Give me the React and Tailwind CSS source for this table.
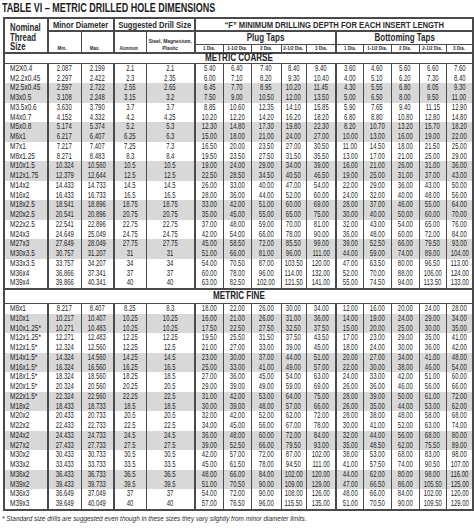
import React from "react";

const COARSE = [
  "w M2X0.4 2.087 2.199 2.1 2.1 5.40 6.40 7.40 8.40 9.40 3.60 4.60 5.60 6.60 7.60",
  "w M2.2x0.45 2.297 2.422 2.3 2.35 6.00 7.10 8.20 9.30 10.40 4.00 5.10 6.20 7.30 8.40",
  "g M2.5x0.45 2.597 2.722 2.55 2.65 6.45 7.70 8.95 10.20 11.45 4.30 5.55 6.80 8.05 9.30",
  "g M3x0.5 3.108 2.248 3.15 3.2 7.50 9.00 10.50 12.00 13.50 5.00 6.50 8.00 9.50 11.00",
  "w M3.5x0.6 3.630 3.790 3.7 3.7 8.85 10.60 12.35 14.10 15.85 5.90 7.65 9.40 11.15 12.90",
  "w M4x0.7 4.152 4.332 4.2 4.25 10.20 12.20 14.20 16.20 18.20 6.80 8.80 10.80 12.80 14.80",
  "g M5x0.8 5.174 5.374 5.2 5.3 12.30 14.80 17.30 19.80 22.30 8.20 10.70 13.20 15.70 18.20",
  "g M6x1 6.217 6.407 6.25 6.3 15.00 18.00 21.00 24.00 27.00 10.00 13.00 16.00 19.00 22.00",
  "w M7x1 7.217 7.407 7.25 7.3 16.50 20.00 23.50 27.00 30.50 11.00 14.50 18.00 21.50 25.00",
  "w M8x1.25 8.271 8.483 8.3 8.4 19.50 23.50 27.50 31.50 35.50 13.00 17.00 21.00 25.00 29.00",
  "g M10x1.5 10.324 10.560 10.5 10.5 19.00 24.00 29.00 34.00 39.00 16.00 21.00 26.00 31.00 36.00",
  "g M12x1.75 12.379 12.644 12.5 12.5 22.50 28.50 34.50 40.50 46.50 19.00 25.00 31.00 37.00 43.00",
  "w M14x2 14.433 14.733 14.5 14.5 26.00 33.00 40.00 47.00 54.00 22.00 29.00 36.00 43.00 50.00",
  "w M16x2 16.433 16.733 16.5 16.5 28.00 36.00 44.00 52.00 60.00 24.00 32.00 40.00 48.00 56.00",
  "g M18x2.5 18.541 18.896 18.75 18.75 33.00 42.00 51.00 60.00 69.00 28.00 37.00 46.00 55.00 64.00",
  "g M20x2.5 20.541 20.896 20.75 20.75 35.00 45.00 55.00 65.00 75.00 30.00 40.00 50.00 60.00 70.00",
  "w M22x2.5 22.541 22.896 22.75 22.75 37.00 48.00 59.00 70.00 81.00 32.00 43.00 54.00 65.00 76.00",
  "w M24x3 24.649 25.049 24.75 24.75 42.00 54.00 66.00 78.00 90.00 36.00 48.00 60.00 72.00 84.00",
  "g M27x3 27.649 28.049 27.75 27.75 45.00 58.50 72.00 85.50 99.00 39.00 52.50 66.00 79.50 93.00",
  "g M30x3.5 30.757 31.207 31 31 51.00 66.00 81.00 96.00 111.00 44.00 59.00 74.00 89.00 104.00",
  "w M33x3.5 33.757 34.207 34 34 54.00 70.50 87.00 103.50 120.00 47.00 63.50 80.00 96.50 113.00",
  "w M36x4 36.866 37.341 37 37 60.00 78.00 96.00 114.00 132.00 52.00 70.00 88.00 106.00 124.00",
  "w M39x4 39.866 40.341 40 40 63.00 82.50 102.00 121.50 141.00 55.00 74.50 94.00 113.50 133.00",
];

const FINE = [
  "w M8x1 8.217 8.407 8.25 8.3 18.00 22.00 26.00 30.00 34.00 12.00 16.00 20.00 24.00 28.00",
  "g M10x1 10.217 10.407 10.25 10.25 16.00 21.00 26.00 31.00 36.00 14.00 19.00 24.00 29.00 34.00",
  "g M10x1.25* 10.271 10.483 10.25 10.25 17.50 22.50 27.50 32.50 37.50 15.00 20.00 25.00 30.00 35.00",
  "w M12x1.25* 12.271 12.483 12.25 12.25 19.50 25.50 31.50 37.50 43.50 17.00 23.00 29.00 35.00 41.00",
  "w M12x1.5* 12.324 12.560 12.25 12.5 21.00 27.00 33.00 39.00 45.00 18.00 24.00 30.00 36.00 42.00",
  "g M14x1.5* 14.324 14.560 14.25 14.5 23.00 30.00 37.00 44.00 51.00 20.00 27.00 34.00 41.00 48.00",
  "g M16x1.5* 16.324 16.560 16.25 16.5 25.00 33.00 41.00 49.00 57.00 22.00 30.00 38.00 46.00 54.00",
  "w M18x1.5* 18.324 18.560 18.25 18.5 27.00 36.00 45.00 54.00 63.00 24.00 33.00 42.00 51.00 60.00",
  "w M20x1.5* 20.324 20.560 20.25 20.5 29.00 39.00 49.00 59.00 69.00 26.00 36.00 46.00 56.00 66.00",
  "g M22x1.5* 22.324 22.560 22.25 22.5 31.00 42.00 53.00 64.00 75.00 28.00 39.00 50.00 61.00 72.00",
  "g M18x2 18.433 18.733 18.5 18.5 30.00 39.00 48.00 57.00 66.00 26.00 35.00 44.00 53.00 62.00",
  "w M20x2 20.433 20.733 20.5 20.5 32.00 42.00 52.00 62.00 72.00 28.00 38.00 48.00 58.00 68.00",
  "w M22x2 22.433 22.733 22.5 22.5 34.00 45.00 56.00 67.00 78.00 30.00 41.00 52.00 63.00 74.00",
  "g M24x2 24.433 24.733 24.5 24.5 36.00 48.00 60.00 72.00 84.00 32.00 44.00 56.00 68.00 80.00",
  "g M27x2 27.433 27.733 27.5 27.5 39.00 52.50 66.00 79.50 93.00 35.00 48.50 62.00 75.50 89.00",
  "w M30x2 30.433 30.733 30.5 30.5 42.00 57.00 72.00 87.00 102.00 38.00 53.00 68.00 83.00 98.00",
  "w M33x2 33.433 33.733 33.5 33.5 45.00 61.50 78.00 94.50 111.00 41.00 57.50 74.00 90.50 107.00",
  "g M36x2 36.433 36.733 36.5 36.5 48.00 66.00 84.00 102.00 120.00 44.00 62.00 80.00 98.00 116.00",
  "g M39x2 39.433 39.733 39.5 39.5 51.00 70.50 90.00 109.00 129.00 47.00 66.50 86.00 105.50 125.00",
  "w M36x3 36.649 37.049 37 37 54.00 72.00 90.00 108.00 126.00 48.00 66.00 84.00 102.00 120.00",
  "w M39x3 39.649 40.049 40 40 57.00 76.50 96.00 115.50 135.00 51.00 70.50 90.00 109.50 129.00",
];

const WIDTHS = [44, 33, 33, 32, 49, 28, 28, 30, 25, 30, 27, 28, 28, 27, 27];

const CELL = [
  "border-l-2",
  "border-l-2",
  "border-l",
  "border-l-2",
  "border-l",
  "border-l-2",
  "border-l",
  "border-l",
  "border-l",
  "border-l",
  "border-l-2",
  "border-l",
  "border-l",
  "border-l",
  "border-l border-r-2",
];

const FONT = "font-['Liberation_Sans','Arial',sans-serif]";
const B = "border-[#4a4a4a]";

function DataRow({ line }) {
  const parts = line.split(" ");
  const shade = parts[0] === "g";
  const cells = parts.slice(1);
  return (
    <tr className={shade ? "bg-[#d8d8d8]" : "bg-white"}>
      {cells.map((c, i) => (
        <td key={i} className={`p-0 ${B} ${CELL[i]}`}>
          <div
            className={`flex h-[9.75px] items-center ${
              i === 0 ? "justify-start pl-[5px]" : "justify-center"
            }`}
          >
            <span
              className={`whitespace-nowrap text-[9px] leading-none text-[#1f1f1f] ${
                i === 0 ? "origin-left scale-x-[0.72]" : "scale-x-[0.66]"
              }`}
            >
              {c}
            </span>
          </div>
        </td>
      ))}
    </tr>
  );
}

function Section({ label, tall }) {
  return (
    <tr>
      <td colSpan={15} className={`p-0 border-x-2 border-t-2 border-b ${B}`}>
        <div className={`flex items-center justify-center ${tall ? "h-[13px]" : "h-[9px]"}`}>
          <span className="whitespace-nowrap text-[10px] leading-none font-bold text-[#222] scale-x-[0.81]">
            {label}
          </span>
        </div>
      </td>
    </tr>
  );
}

function H({ children, s, h, cls }) {
  return (
    <div className={`flex justify-center items-center ${h} ${cls || ""}`}>
      <span className={`whitespace-nowrap font-bold leading-none text-[#2a2a2a] ${s}`}>{children}</span>
    </div>
  );
}

export default function App() {
  return (
    <div className={`w-[474px] h-[531px] bg-white ${FONT}`}>
      <div className="h-[17px] pl-[2px] pt-[2px] text-[12px] leading-[12px]">
        <span className="inline-block origin-left scale-x-[0.75] whitespace-nowrap text-[12px] leading-[12px] font-bold text-[#1c1c1c]">
          TABLE VI – METRIC DRILLED HOLE DIMENSIONS
        </span>
      </div>
      <table className={`ml-[3px] w-[469px] table-fixed border-collapse border-2 ${B}`}>
        <colgroup>
          {WIDTHS.map((w, i) => (
            <col key={i} style={{ width: w }} />
          ))}
        </colgroup>
        <thead>
          <tr>
            <th rowSpan={3} className={`p-0 align-top border-2 ${B}`}>
              <div className="pl-[5px] pt-[4px] text-left">
                <div className="origin-left scale-x-[0.78] whitespace-nowrap text-[10px] leading-[9.5px] font-bold text-[#2a2a2a]">
                  Nominal
                  <br />
                  Thread
                  <br />
                  Size
                </div>
              </div>
            </th>
            <th colSpan={2} className={`p-0 border-2 ${B}`}>
              <H s="text-[9.5px] scale-x-[0.8]" h="h-[11px]">Minor Diameter</H>
            </th>
            <th colSpan={2} className={`p-0 border-2 ${B}`}>
              <H s="text-[9.5px] scale-x-[0.8]" h="h-[11px]">Suggested Drill Size</H>
            </th>
            <th colSpan={10} className={`p-0 border-2 ${B}`}>
              <H s="text-[9.5px] scale-x-[0.8]" h="h-[11px]">“F” MINIMUM DRILLING DEPTH FOR EACH INSERT LENGTH</H>
            </th>
          </tr>
          <tr>
            <th rowSpan={2} className={`p-0 align-bottom border-l-2 border-b-2 ${B}`}>
              <H s="text-[6px] scale-x-[0.75]" h="h-[8px]" cls="pr-[6px]">Min.</H>
            </th>
            <th rowSpan={2} className={`p-0 align-bottom border-l border-b-2 ${B}`}>
              <H s="text-[6px] scale-x-[0.75]" h="h-[8px]" cls="pr-[6px]">Max.</H>
            </th>
            <th rowSpan={2} className={`p-0 align-bottom border-l-2 border-b-2 ${B}`}>
              <H s="text-[6px] scale-x-[0.62]" h="h-[8px]" cls="pr-[4px]">Aluminum</H>
            </th>
            <th rowSpan={2} className={`p-0 align-bottom border-l border-b-2 ${B}`}>
              <div className="flex h-[14px] items-center justify-center">
                <span className="whitespace-nowrap text-center font-bold text-[6px] leading-[6.5px] text-[#2a2a2a] scale-x-[0.82]">
                  Steel, Magnesium,
                  <br />
                  Plastic
                </span>
              </div>
            </th>
            <th colSpan={5} className={`p-0 border-l-2 border-b ${B}`}>
              <H s="text-[10px] scale-x-[0.8]" h="h-[7.5px]">Plug Taps</H>
            </th>
            <th colSpan={5} className={`p-0 border-l-2 border-r-2 border-b ${B}`}>
              <H s="text-[10px] scale-x-[0.8]" h="h-[7.5px]">Bottoming Taps</H>
            </th>
          </tr>
          <tr>
            {["1 Dia.", "1-1/2 Dia.", "2 Dia.", "2-1/2 Dia.", "3 Dia.", "1 Dia.", "1-1/2 Dia.", "2 Dia.", "2-1/2 Dia.", "3 Dia."].map(
              (t, i) => (
                <th key={i} className={`p-0 border-b-2 ${B} ${CELL[i + 5]}`}>
                  <H s="text-[6px] scale-x-[0.75]" h="h-[7px]">{t}</H>
                </th>
              )
            )}
          </tr>
        </thead>
        <tbody>
          <Section label="METRIC COARSE" />
          {COARSE.map((l, i) => (
            <DataRow key={i} line={l} />
          ))}
          <Section label="METRIC FINE" tall />
          {FINE.map((l, i) => (
            <DataRow key={i} line={l} />
          ))}
        </tbody>
      </table>
      <div className="pl-[2px] pt-[3px] text-[8px] leading-[10px]">
        <span className="inline-block origin-left scale-x-[0.8] whitespace-nowrap text-[8px] leading-[10px] italic text-[#2a2a2a]">
          * Standard size drills are suggested even though in these sizes they vary slightly from minor diameter limits.
        </span>
      </div>
    </div>
  );
}
